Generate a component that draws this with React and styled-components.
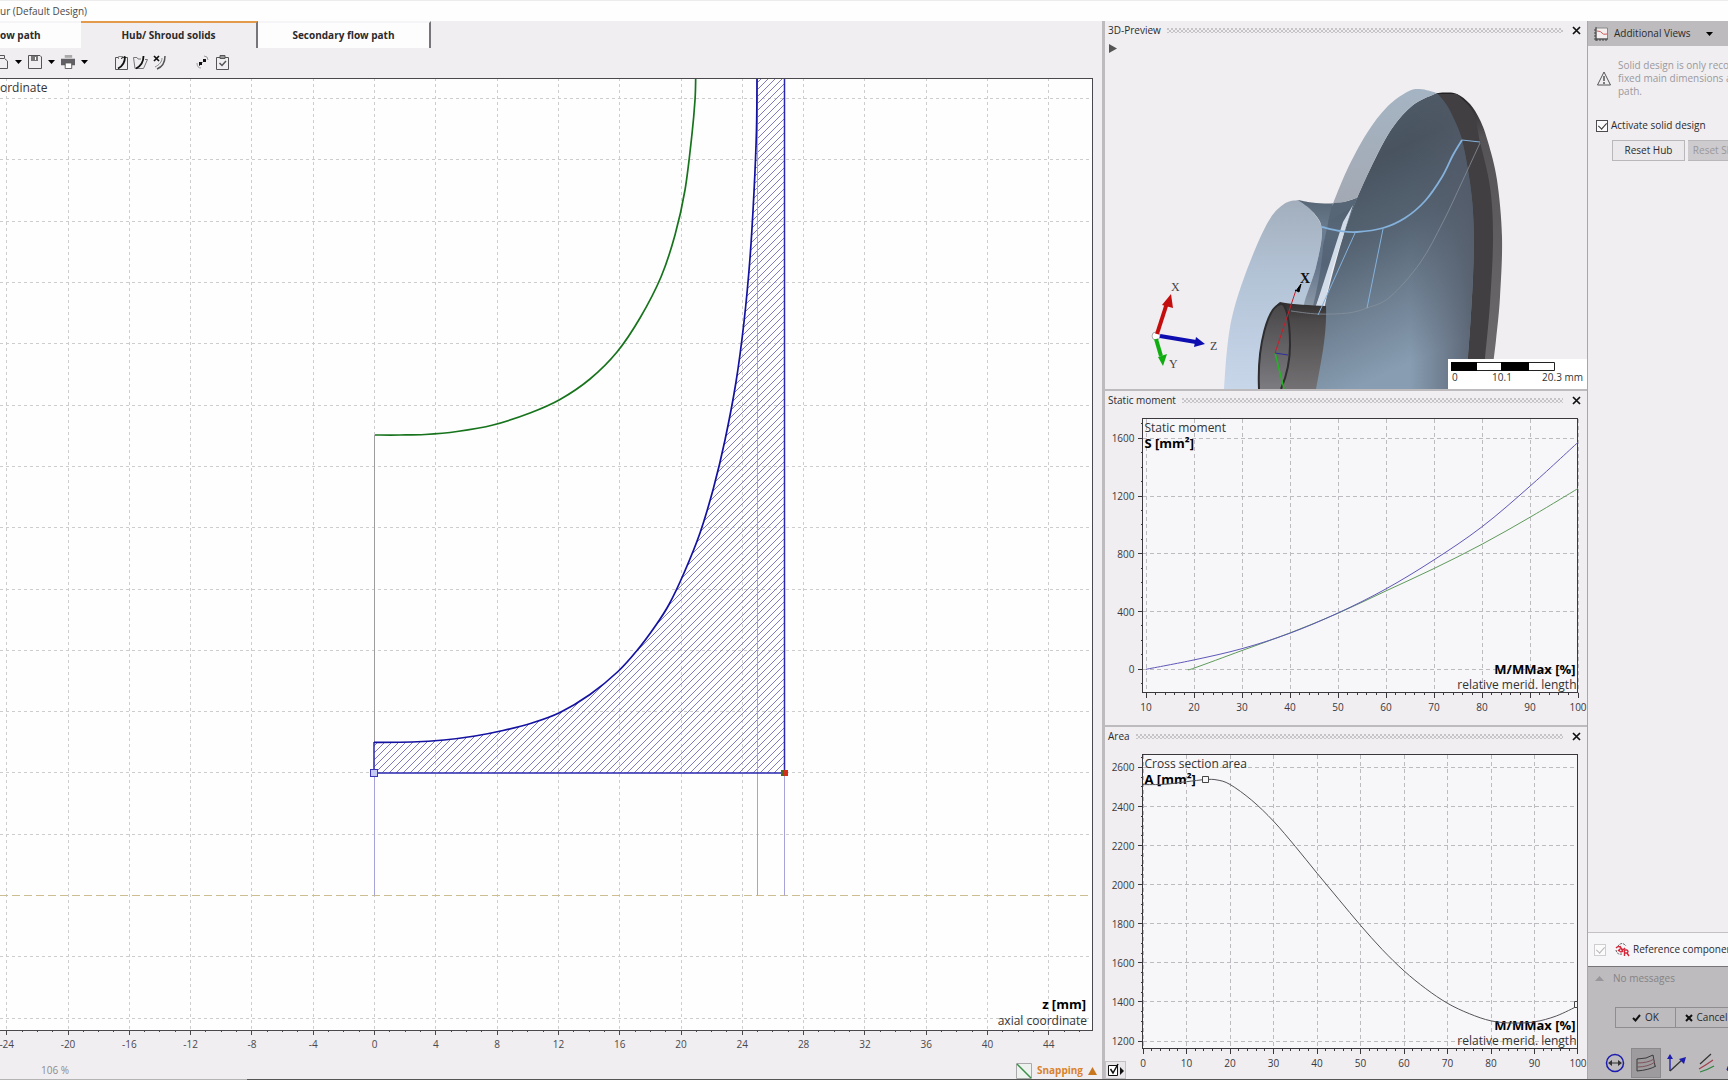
import React from 'react';
import styled, { createGlobalStyle, css } from 'styled-components';

const GlobalStyle = createGlobalStyle`
  * { box-sizing: border-box; }
  body {
    margin: 0;
    overflow: hidden;
    background: #f0eef1;
    color: #2b2a2c;
    font: 10px/13px "Open Sans", "Noto Sans", sans-serif;
  }
  button, input { font: inherit; color: inherit; margin: 0; }
`;

/* ---------- page frame ---------- */

const Window = styled.div`
  display: grid;
  grid-template-rows: 21px minmax(0, 1fr) 1px;
  height: 100vh;
`;
const TitleBar = styled.header`
  display: flex;
  align-items: center;
  background: #fefefe;
  border-top: 1px solid #ececec;
  color: #4a4a4a;
  white-space: nowrap;
`;
const Body = styled.div`
  display: grid;
  grid-template-columns: minmax(0, 1fr) 485px 141px;
  min-height: 0;
`;
const BottomEdge = styled.div`
  background: linear-gradient(90deg, #b4b4b4 247px, #555 247px);
`;
const Editor = styled.main`
  display: flex;
  flex-direction: column;
  min-width: 0;
  min-height: 0;
`;

/* ---------- tabs and toolbar ---------- */

const Tabs = styled.div`
  display: flex;
  flex: none;
  height: 27px;
`;
const Tab = styled.button`
  width: ${p => p.$width}px;
  padding: 0;
  border: 0;
  border-top: 2px solid ${p => (p.$active ? '#e39a4a' : '#f5f4f6')};
  border-right: ${p => (p.$edge ? '2px solid #77757a' : '0')};
  background: ${p => (p.$active ? '#f0eef1' : '#fdfdfe')};
  font-weight: 700;
  text-align: ${p => p.$align || 'center'};
  white-space: nowrap;
`;
const Toolbar = styled.div`
  display: flex;
  align-items: center;
  flex: none;
  height: 30px;
  padding-bottom: 2px;
`;
const ToolGroup = styled.div`
  display: flex;
  align-items: center;
  gap: ${p => p.$gap || 0}px;
  margin-right: ${p => p.$after || 0}px;
`;
const IconButton = styled.button`
  display: grid;
  place-items: center;
  width: ${p => p.$width || 14}px;
  height: 18px;
  padding: 0;
  border: 0;
  background: none;
`;
const Plot = styled.svg`
  display: block;
  flex: 1;
  width: 100%;
  min-height: 0;
`;
const StatusBar = styled.footer`
  display: flex;
  align-items: center;
  justify-content: space-between;
  flex: none;
  height: 19px;
  padding: 2px 5px 0 41px;
  color: #8d8b8f;
`;
const Snapping = styled.button`
  display: flex;
  align-items: center;
  gap: 5px;
  padding: 0;
  border: 0;
  background: none;
  color: #d9822b;
  font-weight: 700;
`;

/* ---------- docked panels ---------- */

const Dock = styled.section`
  display: grid;
  grid-template-rows: 368fr 336fr 354fr;
  min-height: 0;
  border-left: 3px solid #bdbbbe;
`;
const Panel = styled.article`
  position: relative;
  display: flex;
  flex-direction: column;
  min-height: 0;
  ${p => p.$ruled && css`border-top: 2px solid #bdbbbe;`}
`;
const PanelHead = styled.div`
  display: flex;
  align-items: center;
  gap: 6px;
  flex: none;
  height: 19px;
  padding: 0 4px 0 3px;
`;
const PanelTitle = styled.h2`
  margin: 0;
  font: inherit;
`;
const Grip = styled.span`
  flex: 1;
  height: 5px;
  background:
    radial-gradient(circle at 1px 1px, #c6c4c7 1px, transparent 0) 0 0 / 4px 4px,
    radial-gradient(circle at 1px 1px, #c6c4c7 1px, transparent 0) 2px 2px / 4px 4px;
`;
const PlayButton = styled(IconButton)`
  position: absolute;
  left: 1px;
  top: 18px;
`;
const OptionsButton = styled(IconButton)`
  position: absolute;
  left: 0;
  bottom: 0;
  border: 1px solid #c3c1c4;
  background: #e9e7ea;
`;

/* ---------- side bar ---------- */

const Side = styled.aside`
  display: flex;
  flex-direction: column;
  min-height: 0;
  overflow: hidden;
  border-left: 1px solid #a9a7aa;
  white-space: nowrap;
`;
const ViewsButton = styled.button`
  display: flex;
  align-items: center;
  gap: 6px;
  flex: none;
  height: 25px;
  padding: 0 6px;
  border: 0;
  background: #bdbbbd;
`;
const ViewsText = styled.span`
  flex: 1;
  text-align: left;
`;
const CaretSpace = styled.span`
  display: flex;
  padding-right: 9px;
`;
const Notice = styled.div`
  display: flex;
  align-items: center;
  gap: 6px;
  padding: 13px 0 0 8px;
  color: #9b999d;
  svg { flex: none; }
`;
const Options = styled.div`
  display: flex;
  flex-direction: column;
  flex: 1;
  gap: 8px;
  padding-top: 21px;
`;
const CheckLabel = styled.label`
  display: flex;
  align-items: center;
  gap: 3px;
  padding-left: 8px;
`;
const Check = styled.input`
  appearance: none;
  display: grid;
  place-items: center;
  flex: none;
  width: 12px;
  height: 12px;
  border: 1px solid ${p => (p.disabled ? '#cfcdd0' : '#4d4b4f')};
  background: #fbfbfc;
  &:checked::after {
    content: "";
    width: 4px;
    height: 7px;
    margin-bottom: 2px;
    border: solid ${p => (p.disabled ? '#b8b6b9' : '#333')};
    border-width: 0 1px 1px 0;
    transform: rotate(42deg);
  }
`;
const ButtonRow = styled.div`
  display: flex;
  gap: ${p => p.$gap || 0}px;
  padding-left: ${p => p.$indent}px;
`;
const PushButton = styled.button`
  display: flex;
  align-items: center;
  justify-content: center;
  gap: 4px;
  flex: none;
  width: ${p => p.$width}px;
  height: 21px;
  padding: 0;
  border: 1px solid ${p => (p.$flat ? '#8f8d90' : '#b9b7ba')};
  background: ${p => (p.disabled ? '#cdcbce' : p.$flat ? 'transparent' : '#ebe9ec')};
  color: ${p => (p.disabled ? '#9a989b' : '#2b2a2c')};
  & + & { border-left-width: ${p => (p.$flat ? 0 : 1)}px; }
`;
const Reference = styled.div`
  display: flex;
  align-items: center;
  flex: none;
  gap: 3px;
  height: 35px;
  padding-left: 6px;
  border-top: 1px solid #c3c1c4;
  border-bottom: 1px solid #77757a;
  background: #f6f5f8;
`;
const ReferenceLabel = styled.label`
  display: flex;
  align-items: center;
  gap: 3px;
  padding-left: 6px;
`;
const Footer = styled.div`
  flex: none;
  height: 112px;
  background: #bdbbbd;
`;
const Messages = styled.div`
  display: flex;
  align-items: center;
  gap: 9px;
  height: 23px;
  padding-left: 7px;
  color: #858386;
`;
const Confirm = styled(ButtonRow)`
  padding-top: 17px;
`;
const ViewIcons = styled.div`
  display: flex;
  align-items: center;
  gap: 3px;
  padding: 20px 0 0 14px;
`;
const ViewToggle = styled.button`
  display: grid;
  place-items: center;
  flex: none;
  width: ${p => (p.$on ? 30 : 26)}px;
  height: 30px;
  padding: 0;
  border: ${p => (p.$on ? '1px solid #8b898c' : '0')};
  background: ${p => (p.$on ? '#9d9b9e' : 'transparent')};
`;

/* ---------- small drawings ---------- */

const Caret = () => <svg width="7" height="4"><path d="M0 0H7L3.5 4Z" fill="#000" /></svg>;
const Close = () => (
  <svg width="9" height="9" viewBox="0 0 9 9"><path d="M1 1L8 8M8 1L1 8" stroke="#111" strokeWidth="1.7" /></svg>
);
const line = { fill: 'none', stroke: '#555', strokeWidth: 1 };
const CopyIcon = () => (
  <svg width="9" height="16" viewBox="0 0 9 16" {...line}><path d="M0 1.500H4.500V4M0 4.500H4.500L7.500 7V14.500H0" /></svg>
);
const SaveIcon = () => (
  <svg width="14" height="14" viewBox="0 0 14 14" {...line}>
    <path d="M.5 .5H12L13.500 2V13.500H.5Z" /><path d="M3 1H10V6H3Z" fill="#777" stroke="none" /><path d="M7.500 2V5" stroke="#fff" />
  </svg>
);
const PrintIcon = () => (
  <svg width="14" height="14" viewBox="0 0 15 15">
    <path d="M4 0H12V3H4Z" fill="#aaa" /><path d="M0 4H15V11H0Z" fill="#626064" />
    <path d="M4.500 8.500H11.500V14.500H4.500Z" fill="#fff" stroke="#555" />
  </svg>
);
const PasteCurveIcon = () => (
  <svg width="13" height="15" viewBox="0 0 13 15" {...line}>
    <path d="M3 2.500H.5V14.500H12.500V2.500H10" /><path d="M3.500 4V1.500H8" stroke="#888" />
    <path d="M10 1.500C10 7 8 11 3 13.500" stroke="#111" strokeWidth="1.800" /><path d="M6 3.500L10 1.500" stroke="#111" />
  </svg>
);
const OpenCurveIcon = () => (
  <svg width="15" height="15" viewBox="0 0 15 15" {...line}>
    <path d="M2 13.500L.5 2.500H4L5 4H8M2 13.500H10.500L14.500 4.500H12" stroke="#777" />
    <path d="M10.500 1C10.500 7 8 11 3 13.500" stroke="#111" strokeWidth="1.800" />
  </svg>
);
const DeleteCurveIcon = () => (
  <svg width="13" height="15" viewBox="0 0 13 15" {...line}>
    <path d="M1 1L6 6M6 1L1 6" stroke="#111" strokeWidth="1.700" /><path d="M12 1C12 7 9 12 4 14" strokeWidth="1.500" /><path d="M9 3C9 7 6 10 2 12" stroke="#888" />
  </svg>
);
const FitIcon = () => (
  <svg width="13" height="14" viewBox="0 0 13 14" {...line}>
    <path d="M3 11L10 4" strokeDasharray="2 1" /><path d="M3 7H6V10H3ZM7 4H10V7H7Z" fill="#111" stroke="none" />
    <path d="M8 1Q12 1 12 5M1 8Q1 13 5 13" stroke="#999" />
  </svg>
);
const ClipboardIcon = () => (
  <svg width="13" height="15" viewBox="0 0 13 15" {...line}>
    <path d="M.5 2.500H12.500V14.500H.5Z" /><path d="M4 .5H9V3.500H4Z" fill="#999" /><path d="M3.500 8L6 10.500L10 6" strokeWidth="1.500" />
  </svg>
);
const SnapIcon = () => (
  <svg width="16" height="16" viewBox="0 0 16 16">
    <path d="M.5 .5H15.500V15.500H.5Z" fill="#eef2ee" stroke="#aaa" /><path d="M1 1L15 15" stroke="#3c8f4a" strokeWidth="1.500" />
  </svg>
);
const ViewsIcon = () => (
  <svg width="14" height="14" viewBox="0 0 14 14">
    <path d="M2 1H13.500V12H2Z" fill="#f4eeee" stroke="#888" />
    <path d="M0 3H2M0 6H2M0 9H2M0 12H14M3 12V14M6 12V14M9 12V14M12 12V14M2 0V14" stroke="#444" fill="none" />
    <path d="M3 4Q7 4 8 6T13 7" stroke="#cc5a5a" fill="none" />
  </svg>
);
const WarningIcon = () => (
  <svg width="16" height="15" viewBox="0 0 16 15" fill="none" stroke="#555">
    <path d="M8 1L14.500 14H1.500Z" /><path d="M8 5V10M8 11V13" strokeWidth="1.500" />
  </svg>
);
const ReferenceIcon = () => (
  <svg width="15" height="15" viewBox="0 0 15 15" fill="none" stroke="#d4283a">
    <path d="M3 4Q7 -1 11 4M1 8Q2 13 7 12" stroke="#555" strokeDasharray="2 1" />
    <path d="M1 6Q4 3 6 6T10 6M4 8Q6 12 8 8M5 4L8 10M3 9L6 6" strokeWidth="1.400" />
    <path d="M9.500 14V8H12Q14 9.500 12 11H10M12 11L14 14" strokeWidth="1.400" />
  </svg>
);
const DiameterIcon = () => (
  <svg width="20" height="20" viewBox="0 0 20 20" fill="none">
    <circle cx="10" cy="10" r="8.500" stroke="#1c1cae" strokeWidth="1.500" />
    <path d="M4 10H16" stroke="#333" /><path d="M3 10L7 7V13ZM17 10L13 7V13Z" fill="#333" />
  </svg>
);
const MeridianIcon = () => (
  <svg width="22" height="20" viewBox="0 0 22 20" fill="none" stroke="#3b3b3b">
    <path d="M2 6Q12 6 18 2M2 18Q14 17 21 13M2 6V18M18 2L20 13" /><path d="M2 10Q13 10 19 6M2 14Q13 14 20 9" stroke="#7e5359" />
  </svg>
);
const TriangleIcon = () => (
  <svg width="20" height="20" viewBox="0 0 20 20" fill="none" stroke="#1c1cae" strokeWidth="1.300">
    <path d="M3 4V18" /><path d="M3 18L15 7" stroke="#333" /><path d="M0 6L3 1L6 6ZM12 6L19 4L17 11Z" fill="#1c1cae" stroke="none" />
  </svg>
);
const BladeIcon = () => (
  <svg width="18" height="20" viewBox="0 0 18 20" fill="none" strokeWidth="1.200">
    <path d="M3 11L14 1" stroke="#333" /><path d="M2 16Q9 12 16 7" stroke="#a0404c" /><path d="M3 19Q10 17 17 13" stroke="#2e8540" />
  </svg>
);
const EdgeIcon = () => (
  <svg width="20" height="20" viewBox="0 0 20 20" fill="none" stroke="#1c1cae" strokeWidth="1.300">
    <path d="M2 17Q5 8 12 4" /><path d="M2 17H14" stroke="#333" />
  </svg>
);

/* ---------- charts ---------- */

// Catmull-Rom spline through a list of [x, y] points, written as cubic segments.
const spline = pts => pts.slice(1).reduce((d, p, i) => {
  const a = pts[i - 1] || pts[i];
  const b = pts[i];
  const n = pts[i + 2] || p;
  return `${d}C${b[0] + (p[0] - a[0]) / 6} ${b[1] + (p[1] - a[1]) / 6} ${p[0] - (n[0] - b[0]) / 6} ${p[1] - (n[1] - b[1]) / 6} ${p[0]} ${p[1]}`;
}, `M${pts[0][0]} ${pts[0][1]}`);

const range = (from, to, step) => {
  const out = [];
  for (let v = from; v <= to; v += step) out.push(v);
  return out;
};
const snap = v => Math.floor(v) + 0.5;

function LineChart({ height, box, x, y, title, unit, curves, marks = [] }) {
  const sx = v => x.at + (v - x.from) * x.scale;
  const sy = v => y.at - (v - y.from) * y.scale;
  const [l, t, r, b] = box;
  return (
    <Plot viewBox={`0 0 482 ${height}`} role="img" aria-label={title}>
      <rect x={l} y={t} width={r - l} height={b - t} fill="#f7f6f9" />
      <g stroke="#bdbbc0" strokeDasharray="4 3" shapeRendering="crispEdges">
        {x.ticks.map(v => <path key={v} d={`M${snap(sx(v))} ${t}V${b}`} />)}
        {y.ticks.map(v => <path key={v} d={`M${l} ${snap(sy(v))}H${r}`} />)}
      </g>
      <g stroke="#3a383c" shapeRendering="crispEdges">
        {x.minor.map(v => <path key={v} d={`M${snap(sx(v))} ${b}v2`} />)}
        {x.ticks.map(v => <path key={v} d={`M${snap(sx(v))} ${b}v5`} />)}
        {y.minor.map(v => <path key={v} d={`M${l} ${snap(sy(v))}h-2`} />)}
        {y.ticks.map(v => <path key={v} d={`M${l} ${snap(sy(v))}h-5`} />)}
        <rect x={l} y={t} width={r - l} height={b - t} fill="none" />
      </g>
      <g fill="#3a383c">
        {x.ticks.map(v => <text key={v} x={sx(v)} y={b + 18} textAnchor="middle">{v}</text>)}
        {y.ticks.map(v => <text key={v} x={l - 8} y={sy(v) + 4} textAnchor="end">{v}</text>)}
      </g>
      <g fontSize="12" fill="#333">
        <text x={l + 2} y={t + 13}>{title}</text>
        <text x={l + 2} y={t + 29} fontSize="13" fontWeight="700" fill="#000">{unit}</text>
        <text x={r - 2} y={b - 19} fontSize="13" fontWeight="700" fill="#000" textAnchor="end">M/MMax [%]</text>
        <text x={r - 1} y={b - 4} textAnchor="end">relative merid. length</text>
      </g>
      {curves.map(c => (
        <path key={c.color} d={spline(c.data.map(([u, v]) => [sx(u), sy(v)]))} fill="none" stroke={c.color} />
      ))}
      {marks.map(m => (
        <path key={m.at[0]} d={`M${snap(sx(m.at[0])) - 3} ${snap(sy(m.at[1])) - 3}h${m.w}v6h-${m.w}Z`} fill="#f7f6f9" stroke="#444" />
      ))}
    </Plot>
  );
}

const shroud = [[375, 435], [400, 435], [425, 434.5], [457, 431.5], [493, 425], [530, 413], [560, 399.5], [590, 379], [617, 352], [640, 318], [661, 277], [675, 235], [685, 190], [692, 134], [695, 100], [695.7, 78]];
const hub = [[374, 742.3], [412, 742], [444, 740], [475, 736], [503, 730.5], [532, 723], [560, 712.5], [590, 694.5], [618, 671.5], [637, 650.5], [655, 626.5], [669, 604.5], [684, 573], [700, 533], [713.5, 488], [725, 440], [736, 382], [744, 322], [750, 258], [754, 192], [756.5, 130], [757, 78]];

function MeridianPlot() {
  const step = 61.3;
  const xs = range(-24, 44, 4).map(v => [v, 374.5 + (v / 4) * step]);
  const ys = range(0, 15, 1).map(i => 98.6 + i * step);
  return (
    <Plot viewBox="0 78 1102 982" role="img" aria-label="Hub and shroud contour">
      <defs>
        <pattern id="hatch" width="7" height="7" patternUnits="userSpaceOnUse">
          <path d="M-1 8L8 -1M-1 1L1 -1M6 8L8 6" stroke="#6f6db4" strokeWidth=".9" />
        </pattern>
      </defs>
      <rect x="0" y="78" width="1092" height="952" fill="#fefefe" />
      <g stroke="#cdcdce" strokeDasharray="3 3" shapeRendering="crispEdges">
        {xs.map(([v, x]) => <path key={v} d={`M${snap(x)} 78V1030`} />)}
        {ys.filter((_, i) => i !== 13).map(y => <path key={y} d={`M0 ${snap(y)}H1092`} />)}
      </g>
      <path d="M0 895.500H1092" stroke="#cdbd92" strokeDasharray="8 4" />
      <path d={`${spline(hub)}H784.500V773H374Z`} fill="url(#hatch)" />
      <path d="M374.500 435V742" stroke="#9d9d9d" />
      <path d="M374.500 773V895.500M757.500 78V895.500M784.500 773V895.500" stroke="#a5a3da" />
      <path d="M374 742V773H784.500V78" fill="none" stroke="#2a28b0" strokeWidth="1.500" />
      <path d={spline(hub)} fill="none" stroke="#1412a0" strokeWidth="1.700" />
      <path d={spline(shroud)} fill="none" stroke="#17741c" strokeWidth="1.700" />
      <rect x="370.500" y="769.500" width="7" height="7" fill="#c4caf2" stroke="#3a38b8" />
      <rect x="781" y="770" width="4" height="6" fill="#4c6a20" />
      <rect x="784" y="770" width="4" height="6" fill="#d1301c" />
      <g stroke="#4a484c" shapeRendering="crispEdges">
        <path d="M0 78.500H1092.500V1030.500H0" fill="none" />
        {range(-24, 46, 1).map(v => <path key={v} d={`M${snap(374.5 + (v * step) / 4)} 1030v${v % 4 ? 2 : 5}`} />)}
      </g>
      <g fill="#4a484c" textAnchor="middle">
        {xs.map(([v, x]) => <text key={v} x={x} y="1048">{v}</text>)}
      </g>
      <g fontSize="12" fill="#333">
        <text x="0" y="92">ordinate</text>
        <text x="1086" y="1009" fontSize="13" fontWeight="700" fill="#000" textAnchor="end">z [mm]</text>
        <text x="1087" y="1025" textAnchor="end">axial coordinate</text>
      </g>
    </Plot>
  );
}

const joined = (there, back) => `${spline(there)}${spline(back).replace('M', 'L')}Z`;
const discOuter = [[1437, 93], [1446, 92.500], [1457, 94], [1470, 104], [1480, 120], [1488, 142], [1497, 180], [1502, 237], [1500, 297], [1496, 340], [1490, 389]];
const discInner = [[1482, 389], [1485, 358], [1490, 303], [1493, 237], [1490, 187], [1480, 142], [1473, 112], [1457, 94]];
const bowlRight = [[1437, 93], [1446, 104], [1453, 117], [1462, 140], [1470, 183], [1473.500, 223], [1473, 277], [1468, 357], [1464, 389]];
const bowlLeft = [[1314, 389], [1320, 350], [1325, 305], [1343, 237], [1357, 198], [1377, 155], [1393, 127], [1413, 105], [1437, 93]];
const rimOuter = [[1332, 206], [1347, 170], [1367, 133], [1387, 107], [1407, 92], [1420, 89], [1437, 93]];
const rimInner = [[1437, 93], [1413, 105], [1393, 127], [1377, 155], [1357, 198]];
const inletLeft = [[1224, 389], [1227, 350], [1233, 313], [1248, 267], [1268, 222], [1284, 204], [1298, 200]];
const inletRight = [[1298, 200], [1306, 203], [1313, 212], [1322, 230], [1316, 267], [1304, 310], [1300, 389]];
const neckTop = [[1298, 200], [1312, 202.500], [1330, 203.500], [1345, 202], [1357, 198]];
const neckBottom = [[1316, 306], [1304, 306], [1316, 267], [1322, 230], [1313, 212], [1298, 200]];

function Preview() {
  return (
    <Plot viewBox="1105 40 482 349" role="img" aria-label="Impeller preview">
      <defs>
        <linearGradient id="bowl" x1="0" y1="0" x2=".25" y2="1">
          <stop offset="0" stopColor="#556270" /><stop offset=".3" stopColor="#48535f" />
          <stop offset=".55" stopColor="#566473" /><stop offset="1" stopColor="#889db2" />
        </linearGradient>
        <linearGradient id="bowlShade" x1="0" x2="1">
          <stop offset=".6" stopColor="#525a68" stopOpacity="0" /><stop offset="1" stopColor="#525a68" stopOpacity=".85" />
        </linearGradient>
        <linearGradient id="inlet" x1="0" y1="0" x2="0" y2="1">
          <stop offset="0" stopColor="#a2aebc" /><stop offset=".4" stopColor="#b3c3d6" /><stop offset="1" stopColor="#c8d6ea" />
        </linearGradient>
        <linearGradient id="hubSide" x1="0" y1="0" x2="0" y2="1">
          <stop offset="0" stopColor="#2f2d2e" /><stop offset=".2" stopColor="#4b4849" /><stop offset="1" stopColor="#737173" />
        </linearGradient>
        <linearGradient id="hubFace" x1="0" y1="0" x2="0" y2="1">
          <stop offset="0" stopColor="#484647" /><stop offset="1" stopColor="#7c7b80" />
        </linearGradient>
        <linearGradient id="rim" x1="0" y1="0" x2="0" y2="1">
          <stop offset="0" stopColor="#a5b4c3" /><stop offset="1" stopColor="#a3a9b3" />
        </linearGradient>
        <linearGradient id="neck" x1="0" y1="0" x2="0" y2="1">
          <stop offset="0" stopColor="#566574" /><stop offset=".3" stopColor="#6b7d90" />
          <stop offset=".6" stopColor="#64748a" /><stop offset="1" stopColor="#8c99a8" />
        </linearGradient>
        <linearGradient id="disc" x1="0" y1="0" x2="0" y2="1">
          <stop offset="0" stopColor="#222122" /><stop offset=".15" stopColor="#555355" /><stop offset="1" stopColor="#6f6d6f" />
        </linearGradient>
      </defs>
      <path d={`${spline(discOuter)}H1440Z`} fill="url(#disc)" />
      <path d={`${spline(discInner)}H1437L1440 389Z`} fill="#413f41" />
      <path d={joined(bowlRight, bowlLeft)} fill="url(#bowl)" />
      <path d={joined(bowlRight, bowlLeft)} fill="url(#bowlShade)" />
      <path d={`${spline(inletLeft)}${spline(inletRight).replace('M', 'L')}Z`} fill="url(#inlet)" />
      <path d={joined(neckTop, neckBottom)} fill="url(#neck)" />
      <path d="M1332 206L1357 198L1353 207L1316 306H1313C1318 285 1322 265 1323 246Z" fill="#485767" opacity=".55" />
      <path d={joined(rimOuter, rimInner)} fill="url(#rim)" />
      <path d="M1332 206L1334 203Q1347 203 1357 198L1353 207L1328 222Z" fill="#566676" />
      <path d="M1353 205L1343 222L1316 306H1324L1332 270Z" fill="#d3dce9" />
      <path d="M1280 302C1294 305 1310 305 1326 306C1327 335 1321 362 1316 389H1262C1258 345 1268 310 1280 302Z" fill="url(#hubSide)" />
      <path d="M1259 389C1257 345 1268 306 1281 304C1285 303 1290 316 1290 345C1290 360 1287 375 1281 389" fill="url(#hubFace)" stroke="#2e2d2f" strokeWidth="2" />
      <path d={spline([[1291, 311], [1318, 314], [1348, 313], [1367, 308], [1390, 297], [1420, 263], [1443, 222], [1462, 182], [1480, 143]])} fill="none" stroke="#87919a" strokeWidth=".8" />
      <g fill="none" stroke="#84b2dc">
        <path d={spline([[1322, 227], [1340, 231], [1357, 232], [1383, 228], [1405, 218], [1425, 201], [1442, 177], [1453, 155], [1462, 140]])} strokeWidth="1.800" />
        <path d="M1462 140L1480 142M1355 233L1318 315M1383 229L1367 308" />
      </g>
      <path d="M1275 353L1296 290" stroke="#c5202a" />
      <path d="M1296 291L1301 284L1299 292L1295 290Z" fill="#000" stroke="#000" />
      <path d="M1275 353L1284 389" stroke="#22b522" strokeWidth="1.500" />
      <path d="M1275 353L1288 355" stroke="#2c2ca0" />
      <g strokeWidth="4">
        <circle cx="1156" cy="336" r="4" fill="#fff" stroke="#aaa" strokeWidth="1" />
        <path d="M1157 334L1167 303" stroke="#c40d0d" /><path d="M1171 294L1173 308L1162 305Z" fill="#c40d0d" />
        <path d="M1160 336L1196 342" stroke="#0d0db0" /><path d="M1205 344L1194 347L1196 337Z" fill="#0d0db0" />
        <path d="M1156 339L1161 356" stroke="#10ad10" /><path d="M1163 366L1158 357L1167 354Z" fill="#10ad10" />
      </g>
      <g fontFamily="Liberation Serif, serif" fontSize="12" fill="#444">
        <text x="1171" y="291">X</text><text x="1210" y="350">Z</text><text x="1169" y="368">Y</text>
        <text x="1300" y="283" fontSize="14" fontWeight="700" fill="#111">X</text>
      </g>
      <path d="M1448 359H1587V389H1448Z" fill="#fff" />
      <path d="M1451.500 362.500H1554.500V370.500H1451.500Z" fill="#fff" stroke="#222" />
      <path d="M1451 362H1477V371H1451ZM1501 362H1529V371H1501Z" fill="#000" />
      <g fill="#333">
        <text x="1452" y="381">0</text><text x="1502" y="381" textAnchor="middle">10.1</text><text x="1583" y="381" textAnchor="end">20.3 mm</text>
      </g>
    </Plot>
  );
}

const Head = ({ title }) => (
  <PanelHead>
    <PanelTitle>{title}</PanelTitle>
    <Grip />
    <IconButton aria-label={`Close ${title}`}><Close /></IconButton>
  </PanelHead>
);

export default function App() {
  return (
    <Window>
      <GlobalStyle />
      <TitleBar>ur (Default Design)</TitleBar>
      <Body>
        <Editor>
          <Tabs role="tablist">
            <Tab role="tab" $width={81} $align="left">ow path</Tab>
            <Tab role="tab" $width={177} $active $edge aria-selected="true">Hub/ Shroud solids</Tab>
            <Tab role="tab" $width={173} $edge>Secondary flow path</Tab>
          </Tabs>
          <Toolbar>
            <ToolGroup $gap={2} $after={3}>
              <IconButton $width={9} aria-label="Copy"><CopyIcon /></IconButton>
              <IconButton aria-label="Copy options"><Caret /></IconButton>
            </ToolGroup>
            <ToolGroup $gap={2} $after={3}>
              <IconButton aria-label="Save"><SaveIcon /></IconButton>
              <IconButton aria-label="Save options"><Caret /></IconButton>
            </ToolGroup>
            <ToolGroup $gap={2} $after={23}>
              <IconButton aria-label="Print"><PrintIcon /></IconButton>
              <IconButton aria-label="Print options"><Caret /></IconButton>
            </ToolGroup>
            <ToolGroup $gap={5} $after={29}>
              <IconButton aria-label="Paste curve"><PasteCurveIcon /></IconButton>
              <IconButton aria-label="Open curve"><OpenCurveIcon /></IconButton>
              <IconButton aria-label="Delete curve"><DeleteCurveIcon /></IconButton>
            </ToolGroup>
            <ToolGroup $gap={6}>
              <IconButton aria-label="Fit points"><FitIcon /></IconButton>
              <IconButton aria-label="Check"><ClipboardIcon /></IconButton>
            </ToolGroup>
          </Toolbar>
          <MeridianPlot />
          <StatusBar>
            <span>106 %</span>
            <Snapping>
              <SnapIcon />Snapping
              <svg width="9" height="8"><path d="M4.500 0L9 8H0Z" fill="#c9771f" /></svg>
            </Snapping>
          </StatusBar>
        </Editor>

        <Dock>
          <Panel>
            <Head title="3D-Preview" />
            <Preview />
            <PlayButton aria-label="Play"><svg width="8" height="9"><path d="M0 0L8 4.500L0 9Z" fill="#555" /></svg></PlayButton>
          </Panel>
          <Panel $ruled>
            <Head title="Static moment" />
            <LineChart
              height={315}
              box={[37.5, 8.5, 472.5, 282.5]}
              x={{ from: 10, at: 41, scale: 4.8, ticks: range(10, 100, 10), minor: range(12, 98, 2) }}
              y={{ from: 0, at: 259.3, scale: 0.1444, ticks: range(0, 1600, 400), minor: range(-100, 1700, 100) }}
              title="Static moment"
              unit="S [mm²]"
              curves={[
                { color: '#5f9a5b', data: [[18.8, 0], [20, 8], [30, 130], [40, 252], [50, 388], [60, 543], [70, 698], [80, 866], [90, 1053], [100, 1252]] },
                { color: '#5f58b8', data: [[10, 0], [20, 65], [30, 143], [40, 250], [50, 390], [60, 557], [70, 758], [80, 987], [90, 1268], [100, 1572]] },
              ]}
            />
          </Panel>
          <Panel $ruled>
            <Head title="Area" />
            <LineChart
              height={333}
              box={[37.5, 8.5, 472.5, 302.5]}
              x={{ from: 0, at: 38, scale: 4.35, ticks: range(0, 100, 10), minor: range(2, 98, 2) }}
              y={{ from: 1200, at: 295, scale: 0.1954, ticks: range(1200, 2600, 200), minor: range(1200, 2650, 50) }}
              title="Cross section area"
              unit="A [mm²]"
              curves={[
                { color: '#555358', data: [[0, 2512], [5, 2514], [10, 2527], [14.3, 2538], [17, 2536], [20, 2513], [25, 2432], [30, 2325], [35, 2196], [40, 2059], [45, 1925], [50, 1792], [55, 1668], [60, 1559], [65, 1468], [70, 1393], [75, 1340], [80, 1303], [85, 1292], [90, 1298], [95, 1328], [100, 1380]] },
              ]}
              marks={[{ at: [14.3, 2538], w: 6 }, { at: [100, 1386], w: 3 }]}
            />
            <OptionsButton $width={21} aria-label="Chart options">
              <svg width="16" height="14" viewBox="0 0 16 14" fill="none" stroke="#111">
                <path d="M.5 2.500H9.500V12.500H.5Z" fill="#fff" /><path d="M2.500 6L5 10L10 1" strokeWidth="1.500" /><path d="M12 4L16 8L12 12Z" fill="#111" stroke="none" />
              </svg>
            </OptionsButton>
          </Panel>
        </Dock>

        <Side>
          <ViewsButton>
            <ViewsIcon /><ViewsText>Additional Views</ViewsText><CaretSpace><Caret /></CaretSpace>
          </ViewsButton>
          <Notice>
            <WarningIcon />
            <span>Solid design is only reco<br />fixed main dimensions a<br />path.</span>
          </Notice>
          <Options>
            <CheckLabel><Check type="checkbox" defaultChecked />Activate solid design</CheckLabel>
            <ButtonRow $indent={24} $gap={3}>
              <PushButton $width={73}>Reset Hub</PushButton>
              <PushButton $width={73} disabled>Reset Shroud</PushButton>
            </ButtonRow>
          </Options>
          <Reference>
            <Check id="reference" type="checkbox" defaultChecked disabled />
            <ReferenceLabel htmlFor="reference"><ReferenceIcon />Reference components</ReferenceLabel>
          </Reference>
          <Footer>
            <Messages><svg width="9" height="5"><path d="M0 5L4.500 0L9 5Z" fill="#98969a" /></svg>No messages</Messages>
            <Confirm $indent={27}>
              <PushButton $flat $width={61}>
                <svg width="9" height="8"><path d="M1 4L3.500 6.500L8 1" fill="none" stroke="#111" strokeWidth="2" /></svg>OK
              </PushButton>
              <PushButton $flat $width={61}>
                <svg width="8" height="8"><path d="M1 1L7 7M7 1L1 7" stroke="#111" strokeWidth="2" /></svg>Cancel
              </PushButton>
            </Confirm>
            <ViewIcons>
              <ViewToggle aria-label="Main dimensions"><DiameterIcon /></ViewToggle>
              <ViewToggle $on aria-label="Meridional contour"><MeridianIcon /></ViewToggle>
              <ViewToggle aria-label="Blade properties"><TriangleIcon /></ViewToggle>
              <ViewToggle aria-label="Blade mean lines"><BladeIcon /></ViewToggle>
              <ViewToggle aria-label="Blade edges"><EdgeIcon /></ViewToggle>
            </ViewIcons>
          </Footer>
        </Side>
      </Body>
      <BottomEdge />
    </Window>
  );
}
